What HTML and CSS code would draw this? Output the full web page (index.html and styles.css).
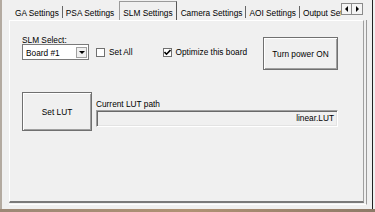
FILE: index.html
```html
<!DOCTYPE html>
<html lang="en">
<head>
<meta charset="utf-8">
<link rel="stylesheet" href="styles.css">
</head>
<body>
<div class="frame">
  <div class="tabctl">
    <div class="tabs">
      <div class="tablist">
        <span class="tab">GA Settings</span>
        <span class="sep"></span>
        <span class="tab">PSA Settings</span>
        <span class="tab tab-active">SLM Settings</span>
        <span class="tab">Camera Settings</span>
        <span class="sep"></span>
        <span class="tab">AOI Settings</span>
        <span class="sep"></span>
        <span class="tab">Output Settings</span>
      </div>
      <div class="scroller">
        <span class="scroll-btn"><span class="arrow-left"></span></span>
        <span class="scroll-btn"><span class="arrow-right"></span></span>
      </div>
    </div>
    <div class="page-wrap">
      <div class="panel">
        <div class="row">
          <div class="field">
            <label class="field-label" for="board">SLM Select:</label>
            <div class="combo" id="board">
              <span class="combo-text">Board #1</span>
              <span class="combo-btn"><span class="arrow-down"></span></span>
            </div>
          </div>
          <label class="check"><span class="check-box"></span>Set All</label>
          <label class="check check-opt"><span class="check-box"><svg width="7" height="7" viewBox="0 0 7 7"><polyline points="0.5,3 2.5,5.2 6.5,1" fill="none" stroke="#000" stroke-width="1.6"/></svg></span>Optimize this board</label>
          <button class="btn btn-power" type="button">Turn power ON</button>
        </div>
        <div class="row row-lut">
          <button class="btn btn-lut" type="button">Set LUT</button>
          <div class="field field-grow">
            <label class="lut-label">Current LUT path</label>
            <div class="textbox">linear.LUT</div>
          </div>
        </div>
      </div>
    </div>
  </div>
</div>
<div class="desk"></div>
</body>
</html>
```

FILE: styles.css
```css
html, body {
  margin: 0;
  padding: 0;
}

body {
  width: 375px;
  height: 212px;
  overflow: hidden;
  background-color: #f0f0f0;
  font-family: "Liberation Sans", Arial, sans-serif;
  font-size: 8.3px;
  color: #000;
}

.frame {
  box-sizing: border-box;
  width: 373px;
  height: 209px;
  border-left: 2px solid #b3aaa0;
  border-right: 1px solid #222;
}

.tabctl {
  margin-left: 7px;
  width: 358px;
}

.tabs {
  display: flex;
  height: 20px;
}

.tablist {
  flex: 1;
  display: flex;
  align-items: flex-end;
  overflow: hidden;
  padding-left: 3px;
}

.tab {
  flex-shrink: 0;
  height: 14px;
  line-height: 14px;
  padding: 0 3px;
  white-space: nowrap;
}

.tab-active {
  padding: 4px 3px 0 3px;
  margin: 0 1px 0 2px;
  border: 1px solid #9a9a9a;
  border-right-color: #555;
  border-bottom: none;
}

.sep {
  flex-shrink: 0;
  width: 1px;
  height: 12px;
  margin-bottom: 2px;
  background-color: #666;
}

.scroller {
  display: flex;
  height: 12px;
  margin: 3px 4px 0 0;
}

.scroll-btn {
  box-sizing: border-box;
  width: 11px;
  height: 12px;
  display: flex;
  align-items: center;
  justify-content: center;
  border: 1px solid #8a8a8a;
  background-color: #f4f4f4;
}

.scroll-btn + .scroll-btn {
  border-left: none;
}

.arrow-left {
  border-top: 3px solid transparent;
  border-bottom: 3px solid transparent;
  border-right: 3px solid #000;
}

.arrow-right {
  border-top: 3px solid transparent;
  border-bottom: 3px solid transparent;
  border-left: 3px solid #000;
}

.page-wrap {
  box-sizing: border-box;
  width: 358px;
  padding-bottom: 1px;
  border-right: 1px solid #9a9a9a;
  border-bottom: 1px solid #fff;
}

.panel {
  box-sizing: border-box;
  width: 355px;
  height: 183px;
  padding: 15px 25px 0 12px;
  border-top: 1px solid #fff;
  border-left: 1px solid #fff;
  border-right: 1px solid #a0a0a0;
  border-bottom: 2px solid #7a7a7a;
}

.row {
  display: flex;
  align-items: flex-start;
}

.field {
  display: flex;
  flex-direction: column;
}

.field-label {
  height: 8px;
  line-height: 8px;
}

.combo {
  box-sizing: border-box;
  width: 67px;
  height: 16px;
  display: flex;
  align-items: center;
  border: 1px solid #7a7a7a;
  background-color: #fff;
}

.combo-text {
  flex: 1;
  padding: 2px 0 0 3px;
}

.combo-btn {
  box-sizing: border-box;
  width: 11px;
  height: 11px;
  margin-right: 1px;
  display: flex;
  align-items: center;
  justify-content: center;
  border: 1px solid #a0a0a0;
  background-color: #f0f0f0;
}

.arrow-down {
  border-left: 3px solid transparent;
  border-right: 3px solid transparent;
  border-top: 3px solid #000;
}

.check {
  display: flex;
  align-items: center;
  height: 9px;
  line-height: 9px;
  margin: 12px 0 0 7px;
  white-space: nowrap;
}

.check-opt {
  margin-left: 30px;
}

.check-box {
  box-sizing: border-box;
  width: 9px;
  height: 9px;
  margin-right: 4px;
  display: flex;
  align-items: center;
  justify-content: center;
  border: 1px solid #707070;
  background-color: #fff;
}

.btn {
  font: inherit;
  color: #000;
  padding: 0;
  background-color: #f0f0f0;
  border: 1px solid #707070;
  box-shadow: inset 1px 1px #fff, inset -1px -1px #a0a0a0;
}

.btn-power {
  margin: 1px 0 0 auto;
  width: 75px;
  height: 33px;
}

.row-lut {
  margin-top: 22px;
}

.btn-lut {
  width: 70px;
  height: 39px;
}

.field-grow {
  flex: 1;
  margin-left: 4px;
}

.lut-label {
  margin-top: 8px;
  height: 9px;
  line-height: 9px;
}

.textbox {
  box-sizing: border-box;
  height: 17px;
  margin-top: 1px;
  padding-right: 3px;
  line-height: 15px;
  text-align: right;
  border: 1px solid;
  border-color: #a0a0a0 #fff #fff #a0a0a0;
  box-shadow: inset 1px 1px #696969, inset -1px -1px #e3e3e3;
}

.desk {
  height: 3px;
  background: linear-gradient(to right, #9c8876, #b09274 50%, #8e7a68);
}
```
